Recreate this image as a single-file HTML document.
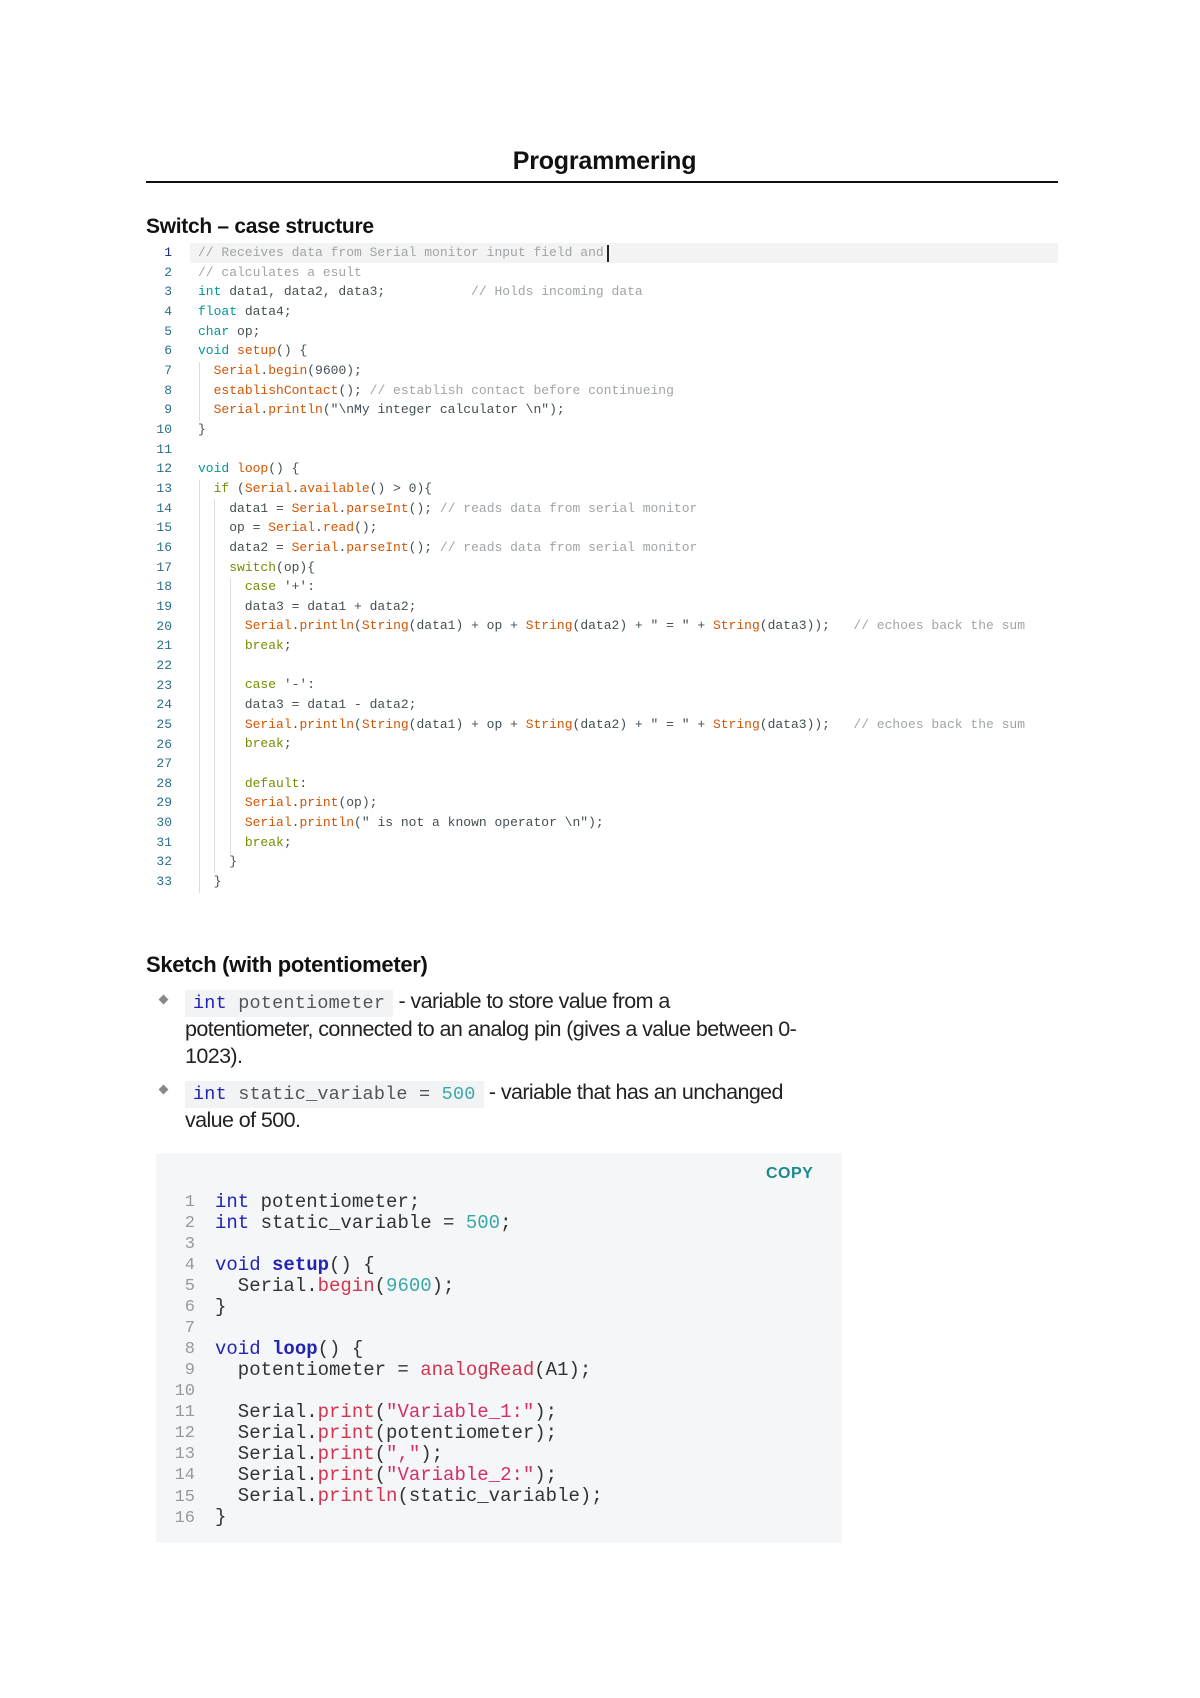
<!DOCTYPE html>
<html><head><meta charset="utf-8"><style>
html,body{margin:0;padding:0;background:#fff;width:1200px;height:1698px;position:relative;overflow:hidden}
.a{position:absolute;white-space:pre}
h1{position:absolute;margin:0;left:0;width:1209px;text-align:center;top:147px;font:bold 25px "Liberation Sans",sans-serif;color:#111;letter-spacing:-0.2px}
.rule{position:absolute;left:146px;top:181px;width:912px;height:2px;background:#111}
.h2{position:absolute;margin:0;font:bold 21px "Liberation Sans",sans-serif;color:#111;letter-spacing:-0.3px;white-space:nowrap}
.c1{font:13px/19.66px "Liberation Mono",monospace;color:#434f54}
.ln{position:absolute;left:140px;width:32px;text-align:right;font:13px/19.66px "Liberation Mono",monospace;color:#2a6e8c}
.cm{color:#a0a4a6}.kt{color:#00979c}.fn{color:#d35400}.kw{color:#728e00}
.guide{position:absolute;width:1px;background:#dcdcdc}
.txt{position:absolute;font:21.5px/27px "Liberation Sans",sans-serif;color:#222;white-space:nowrap;letter-spacing:-0.6px}
.ic{background:#f2f3f5;font:18.5px "Liberation Mono",monospace;padding:3px 8px;color:#555;letter-spacing:0.2px}
.ib{color:#2424b4}.in{color:#3aa8a8}
.dia{position:absolute;width:7px;height:7px;background:#888;transform:rotate(45deg)}
.box{position:absolute;left:156px;top:1153px;width:686px;height:390px;background:#f5f6f8}
.c2{font:19px/21.07px "Liberation Mono",monospace;color:#333}
.ln2{position:absolute;left:160px;width:35px;text-align:right;font:17px/21.07px "Liberation Mono",monospace;color:#999}
.b{color:#2424b4}.bf{color:#2424b4;font-weight:bold}.r{color:#d1344e}.s{color:#d42d6b}.n{color:#3aa8a8}
</style></head><body>
<h1>Programmering</h1>
<div class="rule"></div>
<div class="h2" style="left:146px;top:215px">Switch – case structure</div>

<div style="position:absolute;left:190px;top:243px;width:868px;height:20px;background:#f3f3f3"></div>
<div style="position:absolute;left:607px;top:245px;width:2px;height:17px;background:#222"></div>

<div class="guide" style="left:199px;top:362px;height:59px"></div>
<div class="guide" style="left:199px;top:480px;height:413px"></div>
<div class="guide" style="left:214px;top:499px;height:374px"></div>
<div class="guide" style="left:230px;top:578px;height:276px"></div>

<div class="ln" style="top:243px;color:#1a2a80">1</div>
<div class="ln" style="top:262.66px">2</div>
<div class="ln" style="top:282.32px">3</div>
<div class="ln" style="top:301.98px">4</div>
<div class="ln" style="top:321.64px">5</div>
<div class="ln" style="top:341.3px">6</div>
<div class="ln" style="top:360.96px">7</div>
<div class="ln" style="top:380.62px">8</div>
<div class="ln" style="top:400.28px">9</div>
<div class="ln" style="top:419.94px">10</div>
<div class="ln" style="top:439.6px">11</div>
<div class="ln" style="top:459.26px">12</div>
<div class="ln" style="top:478.92px">13</div>
<div class="ln" style="top:498.58px">14</div>
<div class="ln" style="top:518.24px">15</div>
<div class="ln" style="top:537.9px">16</div>
<div class="ln" style="top:557.56px">17</div>
<div class="ln" style="top:577.22px">18</div>
<div class="ln" style="top:596.88px">19</div>
<div class="ln" style="top:616.54px">20</div>
<div class="ln" style="top:636.2px">21</div>
<div class="ln" style="top:655.86px">22</div>
<div class="ln" style="top:675.52px">23</div>
<div class="ln" style="top:695.18px">24</div>
<div class="ln" style="top:714.84px">25</div>
<div class="ln" style="top:734.5px">26</div>
<div class="ln" style="top:754.16px">27</div>
<div class="ln" style="top:773.82px">28</div>
<div class="ln" style="top:793.48px">29</div>
<div class="ln" style="top:813.14px">30</div>
<div class="ln" style="top:832.8px">31</div>
<div class="ln" style="top:852.46px">32</div>
<div class="ln" style="top:872.12px">33</div>

<div class="a c1" style="left:198px;top:243px"><span class="cm">// Receives data from Serial monitor input field and</span>
<span class="cm">// calculates a esult</span>
<span class="kt">int</span> data1, data2, data3;           <span class="cm">// Holds incoming data</span>
<span class="kt">float</span> data4;
<span class="kt">char</span> op;
<span class="kt">void</span> <span class="fn">setup</span>() {
  <span class="fn">Serial</span>.<span class="fn">begin</span>(9600);
  <span class="fn">establishContact</span>(); <span class="cm">// establish contact before continueing</span>
  <span class="fn">Serial</span>.<span class="fn">println</span>("\nMy integer calculator \n");
}

<span class="kt">void</span> <span class="fn">loop</span>() {
  <span class="kw">if</span> (<span class="fn">Serial</span>.<span class="fn">available</span>() &gt; 0){
    data1 = <span class="fn">Serial</span>.<span class="fn">parseInt</span>(); <span class="cm">// reads data from serial monitor</span>
    op = <span class="fn">Serial</span>.<span class="fn">read</span>();
    data2 = <span class="fn">Serial</span>.<span class="fn">parseInt</span>(); <span class="cm">// reads data from serial monitor</span>
    <span class="kw">switch</span>(op){
      <span class="kw">case</span> '+':
      data3 = data1 + data2;
      <span class="fn">Serial</span>.<span class="fn">println</span>(<span class="fn">String</span>(data1) + op + <span class="fn">String</span>(data2) + " = " + <span class="fn">String</span>(data3));   <span class="cm">// echoes back the sum</span>
      <span class="kw">break</span>;

      <span class="kw">case</span> '-':
      data3 = data1 - data2;
      <span class="fn">Serial</span>.<span class="fn">println</span>(<span class="fn">String</span>(data1) + op + <span class="fn">String</span>(data2) + " = " + <span class="fn">String</span>(data3));   <span class="cm">// echoes back the sum</span>
      <span class="kw">break</span>;

      <span class="kw">default</span>:
      <span class="fn">Serial</span>.<span class="fn">print</span>(op);
      <span class="fn">Serial</span>.<span class="fn">println</span>(" is not a known operator \n");
      <span class="kw">break</span>;
    }
  }</div>

<div class="h2" style="left:146px;top:952px;font-size:22px">Sketch (with potentiometer)</div>

<div class="dia" style="left:160px;top:996px"></div>
<div class="txt" style="left:185px;top:988px"><span class="ic"><span class="ib">int</span> potentiometer</span> - variable to store value from a</div>
<div class="txt" style="left:185px;top:1016px">potentiometer, connected to an analog pin (gives a value between 0-</div>
<div class="txt" style="left:185px;top:1043px">1023).</div>

<div class="dia" style="left:160px;top:1086px"></div>
<div class="txt" style="left:185px;top:1079px"><span class="ic"><span class="ib">int</span> static_variable = <span class="in">500</span></span> - variable that has an unchanged</div>
<div class="txt" style="left:185px;top:1107px">value of 500.</div>

<div class="box"></div>
<div class="a" style="left:766px;top:1165px;font:bold 16px 'Liberation Sans',sans-serif;color:#1b8a90;letter-spacing:0.5px">COPY</div>

<div class="ln2" style="top:1191.5px">1</div>
<div class="ln2" style="top:1212.6px">2</div>
<div class="ln2" style="top:1233.6px">3</div>
<div class="ln2" style="top:1254.7px">4</div>
<div class="ln2" style="top:1275.8px">5</div>
<div class="ln2" style="top:1296.9px">6</div>
<div class="ln2" style="top:1317.9px">7</div>
<div class="ln2" style="top:1339px">8</div>
<div class="ln2" style="top:1360.1px">9</div>
<div class="ln2" style="top:1381.1px">10</div>
<div class="ln2" style="top:1402.2px">11</div>
<div class="ln2" style="top:1423.3px">12</div>
<div class="ln2" style="top:1444.3px">13</div>
<div class="ln2" style="top:1465.4px">14</div>
<div class="ln2" style="top:1486.5px">15</div>
<div class="ln2" style="top:1507.6px">16</div>

<div class="a c2" style="left:215px;top:1191.5px"><span class="b">int</span> potentiometer;
<span class="b">int</span> static_variable = <span class="n">500</span>;

<span class="b">void</span> <span class="bf">setup</span>() {
  Serial.<span class="r">begin</span>(<span class="n">9600</span>);
}

<span class="b">void</span> <span class="bf">loop</span>() {
  potentiometer = <span class="r">analogRead</span>(A1);

  Serial.<span class="r">print</span>(<span class="s">"Variable_1:"</span>);
  Serial.<span class="r">print</span>(potentiometer);
  Serial.<span class="r">print</span>(<span class="s">","</span>);
  Serial.<span class="r">print</span>(<span class="s">"Variable_2:"</span>);
  Serial.<span class="r">println</span>(static_variable);
}</div>
</body></html>
